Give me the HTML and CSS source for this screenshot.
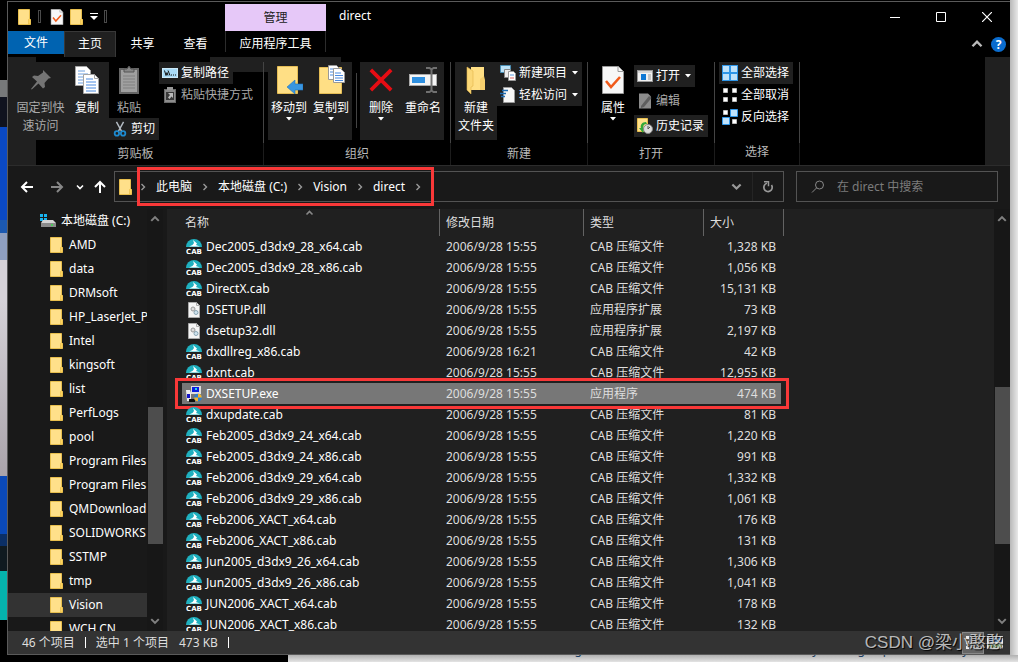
FILE: index.html
```html
<!DOCTYPE html>
<html lang="zh-CN">
<head>
  <meta charset="UTF-8" />
  <meta name="viewport" content="width=device-width, initial-scale=1" />
  <title>direct</title>
  <link rel="stylesheet" href="styles.css">
</head>
<body>
  <!-- Icon sprite -->
  <svg class="sprite" aria-hidden="true">
    <symbol id="i-folder" viewBox="0 0 14 16">
      <path d="M.5.5h11v9.500l1 1v4.500H.5z" fill="#ffe08a" stroke="#e8bf4e"/>
      <path d="M10.500 15V10.500l1-1 1 1V15z" fill="#ffd45e" stroke="#e8bf4e" stroke-width=".7"/>
    </symbol>
    <symbol id="i-checkpage" viewBox="0 0 22 28">
      <path d="M.5.5h16l5 5v22H.5z" fill="#f7f7f7" stroke="#999"/>
      <path d="M16 .5v5h5.500" fill="none" stroke="#999"/>
      <path d="M4 15l5 6 9-10" fill="none" stroke="#f05a1a" stroke-width="2.600"/>
    </symbol>
    <symbol id="i-pin" viewBox="0 0 20 20">
      <path d="M12 0l8 8-2.500.5-4 4.500.5 4-2 1.500-4.500-5L.8 19.500 0 19l6-7.500-5-4.500L3 5.500l4 .5L12 2.500z" fill="#747474"/>
    </symbol>
    <symbol id="i-copy" viewBox="0 0 24 28">
      <path d="M.5.5h11l4 4v15H.5z" fill="#fff" stroke="#a5a5a5"/>
      <path d="M3 5h7M3 8h10M3 11h10M3 14h10M3 17h10" stroke="#6ca0e0"/>
      <path d="M8.500 8.500h11l4 4v15h-15z" fill="#fff" stroke="#a5a5a5"/>
      <path d="M19.500 8.500v4h4" fill="none" stroke="#a5a5a5"/>
      <path d="M11 13h7M11 16h10M11 19h10M11 22h10M11 25h10" stroke="#4a8ae0"/>
    </symbol>
    <symbol id="i-paste" viewBox="0 0 20 28">
      <rect x="1" y="3" width="18" height="24" fill="#a0a0a0" stroke="#666" stroke-width="2"/>
      <path d="M4 10h12M4 13h12M4 16h12M4 19h12M4 22h12" stroke="#808080"/>
      <path d="M5 6V3h3l2-3 2 3h3v3z" fill="#888" stroke="#555"/>
    </symbol>
    <symbol id="i-cut" viewBox="0 0 14 18">
      <path d="M3 1l6 11M11 1L5 12" stroke="#b4bcc4" stroke-width="1.600" fill="none"/>
      <circle cx="3.500" cy="14" r="2.500" fill="none" stroke="#1d8ad0" stroke-width="2"/>
      <circle cx="10.500" cy="14" r="2.500" fill="none" stroke="#1d8ad0" stroke-width="2"/>
    </symbol>
    <symbol id="i-path" viewBox="0 0 16 16">
      <rect x=".5" y="3.500" width="15" height="9" fill="#a9dcf8" stroke="#cdeaf9"/>
      <path d="M2.500 5.500l1.500 5 1-3 1 3M6 5.500l2 5M9 10h1M11 10h1M13 10h1" fill="none" stroke="#111"/>
    </symbol>
    <symbol id="i-pastelink" viewBox="0 0 16 16">
      <rect x="2.500" y="2.500" width="11" height="13" fill="#8c8c8c" stroke="#6a6a6a"/>
      <path d="M5 0h6v3H5z" fill="#999"/>
      <rect x="4" y="5" width="8" height="8" fill="#3a3a3a"/>
      <path d="M6 6h5v5L9.500 9.500 7.500 12 6 10.500 8 8z" fill="#bbb"/>
    </symbol>
    <symbol id="i-moveto" viewBox="0 0 28 30">
      <path d="M2.500 1.500h20v27h-20z" fill="#ffdf85" stroke="#e5bd55"/>
      <path d="M20 22v-4l2-1v11h-2z" fill="#f7cb55"/>
      <path d="M12 22l8-7v4h8v6h-8v4z" fill="#3a96e0" stroke="#2074bd" stroke-width=".6"/>
    </symbol>
    <symbol id="i-copyto" viewBox="0 0 28 30">
      <path d="M2.500 2.500h22v26h-22z" fill="#ffdf85" stroke="#e5bd55"/>
      <path d="M11.500.5h8l3 3v11h-11z" fill="#fff" stroke="#999"/>
      <path d="M13 4h5M13 7h5M13 10h4" stroke="#4a8ae0"/>
      <path d="M16.500 3.500h7l4 4v10h-11z" fill="#fff" stroke="#999"/>
      <path d="M18 8h6M18 10.500h8M18 13h8M18 15.500h8" stroke="#4a8ae0"/>
    </symbol>
    <symbol id="i-delete" viewBox="0 0 26 26">
      <path d="M2 2l22 22M24 2L2 24" stroke="#e60d14" stroke-width="4"/>
    </symbol>
    <symbol id="i-rename" viewBox="0 0 28 28">
      <rect x=".5" y="8.500" width="27" height="11" fill="#f4f4f4" stroke="#aaa"/>
      <rect x="3" y="11" width="13" height="6" fill="#2e8fe0"/>
      <path d="M17 2h3.500l2 1.500v21L20.500 26H17M28 2h-3.500l-2 1.500M22.500 24.500l2 1.500H28" fill="none" stroke="#707070" stroke-width="2"/>
    </symbol>
    <symbol id="i-newfolder" viewBox="0 0 20 28">
      <path d="M5 1h13v13l1 2v8H5z" fill="#ffdf85"/>
      <path d="M14 24V13l4-3 1 4v10z" fill="#f6cf6e"/>
      <path d="M1 1l6 4v15l-2 1v7l-4-4z" fill="#fbd878" stroke="#e2b64c" stroke-width=".6"/>
    </symbol>
    <symbol id="i-newitem" viewBox="0 0 16 16">
      <path d="M.5.5h10v7H.5z" fill="#bde3f8" stroke="#4a8fb5"/>
      <path d="M4.500 4.500h6v8h-6z" fill="#eee" stroke="#888"/>
      <path d="M8.500 6.500h5l2 2v7h-7z" fill="#fff" stroke="#999"/>
      <path d="M10 10h4" stroke="#5a9ae0"/><path d="M10 13h4" stroke="#d66"/>
    </symbol>
    <symbol id="i-easy" viewBox="0 0 16 16">
      <path d="M3.500.5h8l3 3v12h-11z" fill="#f7f7f7" stroke="#999"/>
      <path d="M2 3.500h6M0 6.500h6M1 9.500h4" stroke="#1d6cb5" stroke-width="1.500"/>
    </symbol>
    <symbol id="i-open" viewBox="0 0 16 16">
      <rect x=".5" y="2.500" width="15" height="11" fill="#f2f2f2" stroke="#999"/>
      <path d="M1 4h14" stroke="#bbb"/>
      <rect x="4" y="6" width="5" height="6" fill="#0f78d4"/>
      <path d="M11 7h3M11 9h3M11 11h3" stroke="#999"/>
    </symbol>
    <symbol id="i-edit" viewBox="0 0 16 16">
      <path d="M2 .5h9l3 3v12H2z" fill="#8b8b8b"/>
      <path d="M4 13l8-10 2.500 2L7 14l-3 1z" fill="#5e5e5e"/>
    </symbol>
    <symbol id="i-history" viewBox="0 0 16 16">
      <path d="M.5.5h10v13H.5z" fill="#ffe08a" stroke="#e8bf4e"/>
      <path d="M9 4C5 4 3 7 4 10L2 10l4 5 2-5H6.500C6 7 7 6 10 6z" fill="#32a83a"/>
      <circle cx="11" cy="11" r="4.500" fill="#ddd" stroke="#888"/>
      <path d="M11 8v3l2-2" fill="none" stroke="#555"/>
    </symbol>
    <symbol id="i-selall" viewBox="0 0 16 16">
      <path d="M0 0h16v16H0z" fill="#2f96e8"/>
      <path d="M1 1h6v6H1zM9 1h6v6H9zM1 9h6v6H1zM9 9h6v6H9z" fill="#bfe2fb"/>
    </symbol>
    <symbol id="i-selnone" viewBox="0 0 16 16">
      <path d="M1.500 1.500h4v4h-4zM10.500 1.500h4v4h-4zM1.500 10.500h4v4h-4zM10.500 10.500h4v4h-4z" fill="#fff" stroke="#bbb"/>
    </symbol>
    <symbol id="i-selinv" viewBox="0 0 16 16">
      <path d="M1.500 1.500h4v4h-4zM10.500 10.500h4v4h-4z" fill="#fff" stroke="#bbb"/>
      <path d="M8.500.5h7v7h-7zM.5 8.500h7v7h-7z" fill="#bfe2fb" stroke="#2f96e8"/>
    </symbol>
    <symbol id="i-back" viewBox="0 0 14 14">
      <path d="M7 2L2 7l5 5M2 7h11" fill="none" stroke="currentColor" stroke-width="2"/>
    </symbol>
    <symbol id="i-forward" viewBox="0 0 14 14">
      <path d="M7 2l5 5-5 5M12 7H1" fill="none" stroke="currentColor" stroke-width="2"/>
    </symbol>
    <symbol id="i-up" viewBox="0 0 14 14">
      <path d="M2 7l5-5 5 5M7 2v11" fill="none" stroke="currentColor" stroke-width="2"/>
    </symbol>
    <symbol id="i-down" viewBox="0 0 8 8">
      <path d="M1 2.500l3 3 3-3" fill="none" stroke="currentColor" stroke-width="1.600"/>
    </symbol>
    <symbol id="i-upchev" viewBox="0 0 8 8">
      <path d="M1 5.500l3-3 3 3" fill="none" stroke="currentColor" stroke-width="1.600"/>
    </symbol>
    <symbol id="i-right" viewBox="0 0 8 8">
      <path d="M2.500 1l3 3-3 3" fill="none" stroke="currentColor" stroke-width="1.400"/>
    </symbol>
    <symbol id="i-caret" viewBox="0 0 6 4">
      <path d="M0 0h6L3 3.500z" fill="currentColor"/>
    </symbol>
    <symbol id="i-refresh" viewBox="0 0 12 12">
      <path d="M9.500 4A4.200 4.200 0 1 1 5 2.300" fill="none" stroke="currentColor" stroke-width="1.700"/>
      <path d="M2 .8h4.500v4.400" fill="none" stroke="currentColor" stroke-width="1.500"/>
    </symbol>
    <symbol id="i-search" viewBox="0 0 14 14">
      <circle cx="8.500" cy="5" r="4" fill="none" stroke="currentColor"/>
      <path d="M5.700 7.800L1 12.500" stroke="currentColor"/>
    </symbol>
    <symbol id="i-drive" viewBox="0 0 16 14">
      <path d="M0 0h3v3H0zM4 0h3v3H4zM0 4h3v3H0zM4 4h3v3H4z" fill="#18b4f0"/>
      <path d="M3 6h10l3 3H1z" fill="#d5d5d5"/>
      <path d="M1 9h15v4H1z" fill="#8b8b8b"/>
      <path d="M11 11h2" stroke="#35e04a" stroke-width="1.500"/>
    </symbol>
    <symbol id="i-cab" viewBox="0 0 16 16">
      <path d="M0 8a8 8 0 0 1 16 0z" fill="#1fb0bf"/>
      <path d="M7 1l4 3.500L10 6l4 1.500H3L6.500 6 8 4z" fill="#fff"/>
      <text x="8" y="15" text-anchor="middle" class="cab-text">CAB</text>
    </symbol>
    <symbol id="i-dll" viewBox="0 0 16 16">
      <path d="M2.500.5h8l3 3v12h-11z" fill="#f4f4f4" stroke="#aaa"/>
      <path d="M10.500.5v3h3" fill="none" stroke="#aaa"/>
      <circle cx="7" cy="7" r="2" fill="#ddd" stroke="#999"/>
      <circle cx="10" cy="10.500" r="2" fill="#cfe3ee" stroke="#8aa6b4"/>
    </symbol>
    <symbol id="i-exe" viewBox="0 0 16 16">
      <path d="M5 0h10v8H5z" fill="#ddd"/>
      <path d="M6 1h7v5H6z" fill="#0a1ee0"/>
      <path d="M9 2h2v2H9z" fill="#29d7ee"/>
      <path d="M0 4h4l1 3v8H1z" fill="#eee"/>
      <path d="M1 8h3v4H1z" fill="#1414c8"/>
      <path d="M3 13h6v3H3z" fill="#111"/>
      <circle cx="12" cy="11.500" r="3.800" fill="#2b7fd0"/>
      <path d="M12 7.700v3.800h3.800A3.800 3.800 0 0 0 12 7.700zM12 15.300v-3.800H8.200a3.800 3.800 0 0 0 3.800 3.800z" fill="#f5b52c"/>
    </symbol>
  </svg>

  <div class="window">
    <header class="titlebar">
      <div class="quick">
        <svg class="folder"><use href="#i-folder"/></svg>
        <span class="quick-sep"></span>
        <svg class="quick-check"><use href="#i-checkpage"/></svg>
        <svg class="folder"><use href="#i-folder"/></svg>
        <svg class="quick-more" viewBox="0 0 8 8"><path d="M0 0h8v1H0zM0 3h8L4 7z" fill="#fff"/></svg>
        <span class="quick-sep"></span>
      </div>
      <div class="context-title">管理</div>
      <h1 class="title">direct</h1>
      <div class="controls">
        <button aria-label="最小化"><svg viewBox="0 0 10 10"><path d="M0 5.500h10" stroke="#fff"/></svg></button>
        <button aria-label="最大化"><svg viewBox="0 0 10 10"><path d="M.5.5h9v9h-9z" fill="none" stroke="#fff"/></svg></button>
        <button aria-label="关闭"><svg viewBox="0 0 10 10"><path d="M0 0l10 10M10 0L0 10" stroke="#fff" stroke-width="1.200"/></svg></button>
      </div>
    </header>

    <nav class="tabs">
      <button class="tab file">文件</button>
      <button class="tab active">主页</button>
      <button class="tab">共享</button>
      <button class="tab">查看</button>
      <button class="tab context">应用程序工具</button>
      <div class="tabs-right">
        <button aria-label="折叠功能区"><svg class="collapse"><use href="#i-upchev"/></svg></button>
        <button class="help" aria-label="帮助">?</button>
      </div>
    </nav>

    <section class="ribbon">
      <div class="group clipboard">
        <div class="group-body">
          <button class="big wide dim"><svg class="pin"><use href="#i-pin"/></svg><span>固定到快<br>速访问</span></button>
          <button class="big copy"><svg class="w24"><use href="#i-copy"/></svg><span>复制</span></button>
          <div class="stack">
            <button class="big paste dim"><svg class="w20"><use href="#i-paste"/></svg><span>粘贴</span></button>
            <button class="small patch cut"><svg><use href="#i-cut"/></svg>剪切</button>
          </div>
          <div class="stack">
            <button class="small patch"><svg><use href="#i-path"/></svg>复制路径</button>
            <button class="small dim"><svg><use href="#i-pastelink"/></svg>粘贴快捷方式</button>
          </div>
        </div>
        <div class="group-label">剪贴板</div>
      </div>
      <div class="group organize">
        <div class="group-body">
          <div class="pair patch">
            <button class="big"><svg class="w28"><use href="#i-moveto"/></svg><span>移动到</span><svg class="caret"><use href="#i-caret"/></svg></button>
            <button class="big"><svg class="w28"><use href="#i-copyto"/></svg><span>复制到</span><svg class="caret"><use href="#i-caret"/></svg></button>
          </div>
          <span class="inner-sep"></span>
          <div class="pair patch">
            <button class="big"><svg class="w24"><use href="#i-delete"/></svg><span>删除</span><svg class="caret"><use href="#i-caret"/></svg></button>
            <button class="big"><svg class="w28"><use href="#i-rename"/></svg><span>重命名</span></button>
          </div>
        </div>
        <div class="group-label">组织</div>
      </div>
      <div class="group new">
        <div class="group-body">
          <button class="big patch"><svg class="w20"><use href="#i-newfolder"/></svg><span>新建<br>文件夹</span></button>
          <div class="stack patch">
            <button class="small"><svg><use href="#i-newitem"/></svg>新建项目<svg class="caret"><use href="#i-caret"/></svg></button>
            <button class="small"><svg><use href="#i-easy"/></svg>轻松访问<svg class="caret"><use href="#i-caret"/></svg></button>
          </div>
        </div>
        <div class="group-label">新建</div>
      </div>
      <div class="group open">
        <div class="group-body">
          <button class="big"><svg class="w22"><use href="#i-checkpage"/></svg><span>属性</span><svg class="caret"><use href="#i-caret"/></svg></button>
          <div class="stack loose">
            <button class="small patch"><svg><use href="#i-open"/></svg>打开<svg class="caret"><use href="#i-caret"/></svg></button>
            <button class="small dim"><svg><use href="#i-edit"/></svg>编辑</button>
            <button class="small patch"><svg><use href="#i-history"/></svg>历史记录</button>
          </div>
        </div>
        <div class="group-label">打开</div>
      </div>
      <div class="group select">
        <div class="group-body">
          <div class="stack">
            <button class="small patch"><svg><use href="#i-selall"/></svg>全部选择</button>
            <button class="small"><svg><use href="#i-selnone"/></svg>全部取消</button>
            <button class="small"><svg><use href="#i-selinv"/></svg>反向选择</button>
          </div>
        </div>
        <div class="group-label">选择</div>
      </div>
    </section>

    <div class="navbar">
      <div class="history">
        <button aria-label="后退"><svg><use href="#i-back"/></svg></button>
        <button class="off" aria-label="前进"><svg><use href="#i-forward"/></svg></button>
        <button class="recent" aria-label="最近"><svg class="tiny"><use href="#i-down"/></svg></button>
        <button aria-label="向上"><svg><use href="#i-up"/></svg></button>
      </div>
      <div class="address">
        <svg class="folder"><use href="#i-folder"/></svg>
        <div class="crumbs">
          <svg><use href="#i-right"/></svg><a href="#">此电脑</a>
          <svg><use href="#i-right"/></svg><a href="#">本地磁盘 (C:)</a>
          <svg><use href="#i-right"/></svg><a href="#">Vision</a>
          <svg><use href="#i-right"/></svg><a href="#">direct</a>
          <svg><use href="#i-right"/></svg>
          <span class="mark mark-path"></span>
        </div>
        <button class="drop" aria-label="以前的位置"><svg><use href="#i-down"/></svg></button>
        <button class="refresh" aria-label="刷新"><svg><use href="#i-refresh"/></svg></button>
      </div>
      <div class="search">
        <svg><use href="#i-search"/></svg>
        <input type="text" aria-label="搜索" placeholder="在 direct 中搜索">
      </div>
    </div>

    <main class="content">
      <nav class="tree">
        <ul>
          <li class="drive"><svg><use href="#i-drive"/></svg>本地磁盘 (C:)</li>
          <li><svg><use href="#i-folder"/></svg>AMD</li>
          <li><svg><use href="#i-folder"/></svg>data</li>
          <li><svg><use href="#i-folder"/></svg>DRMsoft</li>
          <li><svg><use href="#i-folder"/></svg>HP_LaserJet_P</li>
          <li><svg><use href="#i-folder"/></svg>Intel</li>
          <li><svg><use href="#i-folder"/></svg>kingsoft</li>
          <li><svg><use href="#i-folder"/></svg>list</li>
          <li><svg><use href="#i-folder"/></svg>PerfLogs</li>
          <li><svg><use href="#i-folder"/></svg>pool</li>
          <li><svg><use href="#i-folder"/></svg>Program Files</li>
          <li><svg><use href="#i-folder"/></svg>Program Files</li>
          <li><svg><use href="#i-folder"/></svg>QMDownload</li>
          <li><svg><use href="#i-folder"/></svg>SOLIDWORKS</li>
          <li><svg><use href="#i-folder"/></svg>SSTMP</li>
          <li><svg><use href="#i-folder"/></svg>tmp</li>
          <li class="current"><svg><use href="#i-folder"/></svg>Vision</li>
          <li><svg><use href="#i-folder"/></svg>WCH.CN</li>
        </ul>
      </nav>
      <div class="scroll tree-scroll">
        <svg><use href="#i-upchev"/></svg><span class="track"></span><span class="thumb"></span><span class="track-end"></span><svg><use href="#i-down"/></svg>
      </div>
      <div class="files">
        <table>
          <thead>
            <tr><th class="name">名称<svg class="sort"><use href="#i-upchev"/></svg></th><th class="date">修改日期</th><th class="type">类型</th><th class="size">大小</th></tr>
          </thead>
          <tbody>
            <tr><td><svg><use href="#i-cab"/></svg>Dec2005_d3dx9_28_x64.cab</td><td>2006/9/28 15:55</td><td>CAB 压缩文件</td><td>1,328 KB</td></tr>
            <tr><td><svg><use href="#i-cab"/></svg>Dec2005_d3dx9_28_x86.cab</td><td>2006/9/28 15:55</td><td>CAB 压缩文件</td><td>1,056 KB</td></tr>
            <tr><td><svg><use href="#i-cab"/></svg>DirectX.cab</td><td>2006/9/28 15:55</td><td>CAB 压缩文件</td><td>15,131 KB</td></tr>
            <tr><td><svg><use href="#i-dll"/></svg>DSETUP.dll</td><td>2006/9/28 15:55</td><td>应用程序扩展</td><td>73 KB</td></tr>
            <tr><td><svg><use href="#i-dll"/></svg>dsetup32.dll</td><td>2006/9/28 15:55</td><td>应用程序扩展</td><td>2,197 KB</td></tr>
            <tr><td><svg><use href="#i-cab"/></svg>dxdllreg_x86.cab</td><td>2006/9/28 16:21</td><td>CAB 压缩文件</td><td>42 KB</td></tr>
            <tr><td><svg><use href="#i-cab"/></svg>dxnt.cab</td><td>2006/9/28 15:55</td><td>CAB 压缩文件</td><td>12,955 KB</td></tr>
            <tr class="selected"><td><svg><use href="#i-exe"/></svg>DXSETUP.exe<span class="mark mark-row"></span></td><td>2006/9/28 15:55</td><td>应用程序</td><td>474 KB</td></tr>
            <tr><td><svg><use href="#i-cab"/></svg>dxupdate.cab</td><td>2006/9/28 15:55</td><td>CAB 压缩文件</td><td>81 KB</td></tr>
            <tr><td><svg><use href="#i-cab"/></svg>Feb2005_d3dx9_24_x64.cab</td><td>2006/9/28 15:55</td><td>CAB 压缩文件</td><td>1,220 KB</td></tr>
            <tr><td><svg><use href="#i-cab"/></svg>Feb2005_d3dx9_24_x86.cab</td><td>2006/9/28 15:55</td><td>CAB 压缩文件</td><td>991 KB</td></tr>
            <tr><td><svg><use href="#i-cab"/></svg>Feb2006_d3dx9_29_x64.cab</td><td>2006/9/28 15:55</td><td>CAB 压缩文件</td><td>1,332 KB</td></tr>
            <tr><td><svg><use href="#i-cab"/></svg>Feb2006_d3dx9_29_x86.cab</td><td>2006/9/28 15:55</td><td>CAB 压缩文件</td><td>1,061 KB</td></tr>
            <tr><td><svg><use href="#i-cab"/></svg>Feb2006_XACT_x64.cab</td><td>2006/9/28 15:55</td><td>CAB 压缩文件</td><td>176 KB</td></tr>
            <tr><td><svg><use href="#i-cab"/></svg>Feb2006_XACT_x86.cab</td><td>2006/9/28 15:55</td><td>CAB 压缩文件</td><td>131 KB</td></tr>
            <tr><td><svg><use href="#i-cab"/></svg>Jun2005_d3dx9_26_x64.cab</td><td>2006/9/28 15:55</td><td>CAB 压缩文件</td><td>1,306 KB</td></tr>
            <tr><td><svg><use href="#i-cab"/></svg>Jun2005_d3dx9_26_x86.cab</td><td>2006/9/28 15:55</td><td>CAB 压缩文件</td><td>1,041 KB</td></tr>
            <tr><td><svg><use href="#i-cab"/></svg>JUN2006_XACT_x64.cab</td><td>2006/9/28 15:55</td><td>CAB 压缩文件</td><td>178 KB</td></tr>
            <tr><td><svg><use href="#i-cab"/></svg>JUN2006_XACT_x86.cab</td><td>2006/9/28 15:55</td><td>CAB 压缩文件</td><td>132 KB</td></tr>
          </tbody>
        </table>
      </div>
      <div class="scroll file-scroll">
        <svg><use href="#i-upchev"/></svg><span class="track"></span><span class="thumb"></span><span class="track-end"></span><svg><use href="#i-down"/></svg>
      </div>
    </main>

    <footer class="status">
      <span>46 个项目</span>
      <span class="bar"></span>
      <span>选中 1 个项目</span>
      <span>473 KB</span>
      <span class="bar"></span>
      <div class="views">
        <button class="on" aria-label="详细信息"><svg viewBox="0 0 14 14"><path d="M0 0h3v3H0zM0 5h3v3H0zM0 10h3v3H0z" fill="#eee"/><path d="M5 1.500h8M5 6.500h8M5 11.500h8" stroke="#bbb"/></svg></button>
        <button aria-label="大图标"><svg viewBox="0 0 14 14"><path d="M0 1h14v11H0z" fill="#eee"/><path d="M1 2h12v4H1z" fill="#4a80c0"/><path d="M1 8h12v3H1z" fill="#7aa06a"/></svg></button>
      </div>
      <span class="watermark">CSDN @梁小憨憨</span>
    </footer>
  </div>

  <!-- Page showing below the window -->
  <div class="behind">
    <p>which will also introduce more of the DLL regression transformation kit in section analyze to sign up now and let you</p>
  </div>
</body>
</html>
```
FILE: styles.css
```css
* {
  box-sizing: border-box;
}
body {
  margin: 0;
  height: 100vh;
  padding: 1px 8px 0 7px;
  display: flex;
  flex-direction: column;
  overflow: hidden;
  font-family: "Noto Sans", "Noto Sans CJK SC", sans-serif;
  font-size: 12px;
  line-height: 18px;
  color: #fff;
  background:
    linear-gradient(#000 0 80px, #77797a 80px 97px, #10131f 97px 127px, #0a49c4 127px 220px, #1c59b0 220px 233px, #8f9fc0 233px 260px, #d5d2d8 260px 300px, #a9a3aa 476px, #0a49b8 476px 534px, #0b2f66 534px 546px, #101a20 546px 571px, #05b3ad 571px 620px, #000 620px) left / 8px 100% no-repeat,
    linear-gradient(90deg, #b8b8b8, #e8e8e8) right / 8px 100% no-repeat,
    #000;
}
button {
  font: inherit;
  color: inherit;
  background: none;
  border: none;
  padding: 0;
  margin: 0;
}
svg {
  display: block;
  flex: none;
}
.sprite {
  position: absolute;
  width: 0;
  height: 0;
}
.window {
  flex: 1;
  min-height: 0;
  display: flex;
  flex-direction: column;
  border: 1px solid #5a5a5a;
  border-right-width: 0;
  background: #191919;
}
.folder {
  width: 14px;
  height: 16px;
}

/* Title bar */
.titlebar {
  display: flex;
  height: 29px;
  background: #000;
}
.quick {
  width: 217px;
  padding-left: 10px;
  display: flex;
  align-items: center;
  gap: 6px;
}
.quick-sep {
  width: 3px;
  height: 13px;
  border: 1px solid #4a4a4a;
}
.quick-check {
  width: 14px;
  height: 16px;
  margin-left: 3px;
}
.quick-more {
  width: 8px;
  height: 8px;
}
.context-title {
  width: 101px;
  margin-top: 2px;
  line-height: 27px;
  text-align: center;
  color: #222;
  background: #e6c8f8;
}
.title {
  flex: 1;
  margin: 0 0 0 13px;
  font-size: 12px;
  font-weight: 400;
  line-height: 27px;
}
.controls {
  display: flex;
}
.controls button {
  width: 46px;
  display: flex;
  align-items: center;
  justify-content: center;
}
.controls svg {
  width: 10px;
  height: 10px;
}

/* Ribbon tabs */
.tabs {
  display: flex;
  height: 26px;
  background: #000;
}
.tab {
  width: 53px;
  height: 25px;
}
.tab.file {
  width: 56px;
  height: 23px;
  background: #0063b1;
}
.tab.active {
  width: 52px;
  height: 26px;
  padding-bottom: 2px;
  border: 1px solid #383838;
  border-bottom: none;
  background: #202020;
}
.tab.context {
  width: 101px;
  height: 21px;
  margin-left: 3px;
  padding-top: 4px;
  border: 1px solid #2c2c2c;
  border-width: 0 1px;
}
.tabs-right {
  margin-left: auto;
  padding-right: 4px;
  display: flex;
  align-items: center;
  gap: 8px;
}
.collapse {
  width: 12px;
  height: 12px;
  color: #bbb;
}
.help {
  width: 15px;
  height: 15px;
  border-radius: 50%;
  background: #0a6cce;
  font-weight: 700;
  line-height: 15px;
}

/* Ribbon */
.ribbon {
  display: flex;
  height: 109px;
  padding-top: 5px;
  border-bottom: 1px solid #2c2c2c;
  background:
    linear-gradient(#202020, #202020) left / 28px 100% no-repeat,
    linear-gradient(#202020, #202020) right / 25px 100% no-repeat,
    linear-gradient(#202020, #202020) 202px 0 / 58px 15px no-repeat,
    linear-gradient(#202020, #202020) 256px 0 / 77px 5px no-repeat,
    #000;
}
.group {
  display: flex;
  flex-direction: column;
  border-right: 1px solid;
  border-image: linear-gradient(#444 0 80px, #1c1c1c 80px) 1;
}
.group-body {
  display: flex;
  align-items: flex-start;
  height: 78px;
}
.group-label {
  padding: 5px 0 4px;
  text-align: center;
  color: #b8b8b8;
}
.patch {
  background: #202020;
}
.dim {
  color: #aaa;
}
.stack {
  display: flex;
  flex-direction: column;
  align-items: flex-start;
}
.loose {
  gap: 3px;
  padding-top: 3px;
}
.pair {
  display: flex;
}
.big {
  width: 42px;
  height: 78px;
  padding-top: 3px;
  display: flex;
  flex-direction: column;
  align-items: center;
  justify-content: flex-start;
  white-space: nowrap;
}
.big svg {
  height: 30px;
  margin-bottom: 4px;
}
.big.wide {
  width: 65px;
  background: #202020;
}
.big.copy {
  width: 36px;
  padding-right: 8px;
  background: #202020;
}
.big.paste {
  width: 40px;
  height: 56px;
}
.big .pin {
  width: 20px;
}
.w20 {
  width: 20px;
}
.w22 {
  width: 22px;
}
.w24 {
  width: 24px;
}
.w28 {
  width: 28px;
}
.small {
  height: 22px;
  padding: 0 4px 0 3px;
  display: flex;
  align-items: center;
  gap: 3px;
  white-space: nowrap;
}
.small svg {
  width: 16px;
  height: 16px;
}
.small .caret {
  width: 6px;
  height: 4px;
  margin-left: 2px;
}
.big .caret {
  width: 6px;
  height: 4px;
  margin: 0;
}
.small.cut {
  width: 50px;
}
.clipboard {
  width: 256px;
}
.organize,
.new,
.open,
.select {
  padding: 0 4px;
}
.organize {
  width: 187px;
}
.inner-sep {
  width: 1px;
  height: 55px;
  margin: 11px 3px 0 4px;
  background: #444;
}
.new {
  width: 137px;
}
.open {
  width: 127px;
}
.select {
  width: 85px;
}

/* Address bar */
.navbar {
  display: flex;
  height: 43px;
  padding: 5px 12px 7px 12px;
}
.history {
  width: 94px;
  display: flex;
  align-items: center;
  gap: 16px;
}
.history svg {
  width: 14px;
  height: 14px;
}
.history svg.tiny {
  width: 8px;
  height: 8px;
}
.history .off {
  color: #888;
}
.history .recent {
  margin: 0 -7px 0 -4px;
}
.address {
  flex: 1;
  display: flex;
  align-items: center;
  border: 1px solid #535353;
  padding-left: 4px;
}
.crumbs {
  position: relative;
  flex: 1;
  padding-left: 6px;
  display: flex;
  align-items: center;
  gap: 9px;
}
.crumbs svg {
  width: 8px;
  height: 8px;
  color: #999;
}
.crumbs a {
  color: #fff;
  text-decoration: none;
}
.drop,
.refresh {
  width: 31px;
  align-self: stretch;
  display: flex;
  align-items: center;
  justify-content: center;
  color: #999;
}
.refresh {
  border-left: 1px solid #252525;
}
.drop svg {
  width: 11px;
  height: 11px;
}
.refresh svg {
  width: 12px;
  height: 12px;
}
.search {
  width: 202px;
  margin-left: 12px;
  padding-left: 14px;
  display: flex;
  align-items: center;
  gap: 12px;
  border: 1px solid #535353;
  color: #888;
}
.search svg {
  width: 14px;
  height: 14px;
}
.search input {
  flex: 1;
  min-width: 0;
  padding: 0;
  border: none;
  outline: none;
  background: none;
  font: inherit;
  color: #fff;
}
.search input::placeholder {
  color: #7c7c7c;
}

/* Red highlight frames */
.mark {
  position: absolute;
  border: 3px solid #f93838;
  pointer-events: none;
}
.mark-path {
  left: 4px;
  top: -11px;
  width: 297px;
  height: 39px;
}
.mark-row {
  left: -7px;
  top: -5px;
  width: 614px;
  height: 31px;
}

/* Folder tree */
.content {
  flex: 1;
  min-height: 0;
  display: flex;
}
.tree {
  width: 139px;
  overflow: hidden;
}
.tree ul {
  margin: 0;
  padding: 0;
  list-style: none;
}
.tree li {
  height: 24px;
  padding-left: 42px;
  display: flex;
  align-items: center;
  gap: 5px;
  white-space: nowrap;
}
.tree li.drive {
  padding-left: 32px;
}
.tree svg {
  width: 14px;
  height: 16px;
}
.tree .drive svg {
  width: 16px;
  height: 14px;
}
.tree .current {
  background: #333;
}

/* Scrollbars */
.scroll {
  width: 16px;
  padding: 5px 0;
  display: flex;
  flex-direction: column;
  align-items: center;
  background: #171717;
}
.scroll svg {
  width: 10px;
  height: 10px;
  color: #808080;
}
.thumb {
  width: 15px;
  background: #4d4d4d;
}
.tree-scroll .track {
  flex: 183;
}
.tree-scroll .thumb {
  flex: 137;
}
.tree-scroll .track-end {
  flex: 72;
}
.file-scroll .track {
  flex: 163;
}
.file-scroll .thumb {
  flex: 157;
}
.file-scroll .track-end {
  flex: 72;
}

/* File list */
.files {
  flex: 1;
  min-width: 0;
  margin-left: 4px;
  padding-left: 15px;
  overflow: hidden;
  background: #202020;
}
.files table {
  width: 602px;
  border-collapse: separate;
  border-spacing: 0;
  table-layout: fixed;
}
.files th {
  position: relative;
  height: 27px;
  padding: 0 6px;
  border-right: 1px solid #636363;
  font-weight: 400;
  text-align: left;
  color: #dedede;
}
.files th.name {
  width: 258px;
  padding-left: 3px;
}
.files th.date {
  width: 144px;
}
.files th.type {
  width: 120px;
}
.files .sort {
  position: absolute;
  left: 48%;
  top: 0;
  width: 9px;
  height: 8px;
  color: #888;
}
.files td {
  height: 21px;
  padding: 0 6px;
  line-height: 21px;
  white-space: nowrap;
  color: #dedede;
}
.files td:first-child {
  position: relative;
  padding-left: 4px;
  color: #fff;
}
.files td:last-child {
  padding-right: 8px;
  text-align: right;
}
.files td svg {
  display: inline-block;
  width: 16px;
  height: 16px;
  margin: 0 4px 2px 0;
  vertical-align: middle;
}
.cab-text {
  font: 700 7px "DejaVu Sans", sans-serif;
  fill: #fff;
}
.files .selected td {
  background: #777;
}
.files .selected td:last-child {
  background: linear-gradient(90deg, #777 calc(100% - 3px), #202020 0);
}

/* Status bar */
.status {
  position: relative;
  height: 23px;
  padding: 0 4px 0 14px;
  display: flex;
  align-items: center;
  gap: 10px;
  background: #333;
  color: #dedede;
}
.status .bar {
  width: 1px;
  height: 11px;
  background: #fff;
}
.views {
  margin-left: auto;
  display: flex;
  align-items: center;
}
.views button {
  width: 22px;
  height: 22px;
  padding: 3px;
}
.views .on {
  border: 1px solid #888;
  background: #666;
}
.watermark {
  position: absolute;
  right: 7px;
  top: 0;
  font: 17px/23px "Liberation Sans", "Noto Sans CJK SC", sans-serif;
  color: rgba(225, 225, 225, 0.8);
  text-shadow: 1px 1px 1px #000;
}
.behind {
  height: 7px;
  margin: 0 -8px 0 281px;
  padding-left: 40px;
  display: flex;
  align-items: flex-end;
  overflow: hidden;
  background: linear-gradient(#b0b0b0, #e4e4e4);
}
.behind p {
  margin: 0;
  line-height: 24px;
  white-space: nowrap;
  color: #1d3f63;
}
```
